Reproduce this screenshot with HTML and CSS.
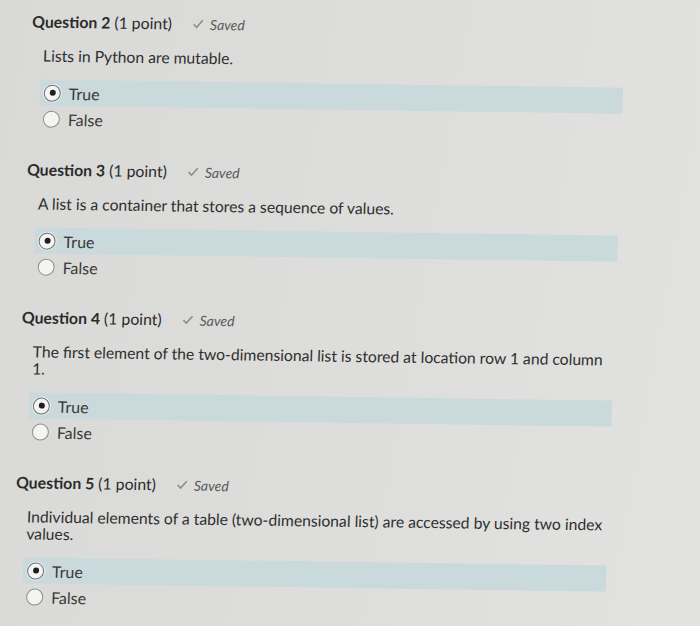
FILE: index.html
```html
<!DOCTYPE html>
<html lang="en">
<head>
<meta charset="utf-8">
<title>Quiz</title>
<link rel="stylesheet" href="styles.css">
</head>
<body>
<div class="page">
  <div class="quiz">
    <section class="question">
      <div class="q-head"><span class="q-title"><b>Question 2</b> (1 point)</span><span class="saved"><svg class="check" viewBox="0 0 12 12"><path d="M1.5 6.5 L4.5 9.5 L10.5 2.5"/></svg>Saved</span></div>
      <p class="q-text">Lists in Python are mutable.</p>
      <div class="options">
        <div class="opt selected"><span class="radio"></span><span class="label">True</span></div>
        <div class="opt"><span class="radio"></span><span class="label">False</span></div>
      </div>
    </section>
    <section class="question">
      <div class="q-head"><span class="q-title"><b>Question 3</b> (1 point)</span><span class="saved"><svg class="check" viewBox="0 0 12 12"><path d="M1.5 6.5 L4.5 9.5 L10.5 2.5"/></svg>Saved</span></div>
      <p class="q-text">A list is a container that stores a sequence of values.</p>
      <div class="options">
        <div class="opt selected"><span class="radio"></span><span class="label">True</span></div>
        <div class="opt"><span class="radio"></span><span class="label">False</span></div>
      </div>
    </section>
    <section class="question">
      <div class="q-head"><span class="q-title"><b>Question 4</b> (1 point)</span><span class="saved"><svg class="check" viewBox="0 0 12 12"><path d="M1.5 6.5 L4.5 9.5 L10.5 2.5"/></svg>Saved</span></div>
      <p class="q-text">The first element of the two-dimensional list is stored at location row 1 and column 1.</p>
      <div class="options">
        <div class="opt selected"><span class="radio"></span><span class="label">True</span></div>
        <div class="opt"><span class="radio"></span><span class="label">False</span></div>
      </div>
    </section>
    <section class="question">
      <div class="q-head"><span class="q-title"><b>Question 5</b> (1 point)</span><span class="saved"><svg class="check" viewBox="0 0 12 12"><path d="M1.5 6.5 L4.5 9.5 L10.5 2.5"/></svg>Saved</span></div>
      <p class="q-text">Individual elements of a table (two-dimensional list) are accessed by using two index values.</p>
      <div class="options">
        <div class="opt selected"><span class="radio"></span><span class="label">True</span></div>
        <div class="opt"><span class="radio"></span><span class="label">False</span></div>
      </div>
    </section>
  </div>
</div>
</body>
</html>
```
FILE: styles.css
```css
html, body {
  margin: 0;
  padding: 0;
  height: 100%;
  overflow: hidden;
}
body {
  background: linear-gradient(100deg, #d9d9d7 0%, #dddddb 50%, #e2e2e0 100%);
  font-family: Lato, "Open Sans", sans-serif;
  color: #333;
}
.page {
  width: 700px;
  height: 626px;
  overflow: hidden;
}
.quiz {
  padding: 10px 0 0 33px;
  width: 610px;
  transform-origin: 0 0;
  transform: rotate(0.8deg) skewX(-1.2deg);
}
.question {
  margin-bottom: 27px;
}
.q-head {
  display: flex;
  align-items: center;
  height: 20px;
  gap: 20px;
}
.q-title {
  font-size: 15.8px;
  color: #2b2b2b;
}
.q-title b {
  font-weight: 700;
}
.saved {
  display: flex;
  align-items: center;
  gap: 6px;
  font-size: 14px;
  font-style: italic;
  color: #5a5a5a;
  padding-top: 2px;
}
.check {
  width: 12px;
  height: 12px;
  fill: none;
  stroke: #8c8c8c;
  stroke-width: 1.6;
}
.q-text {
  margin: 17px 0 0 12px;
  width: 581px;
  font-size: 15.7px;
  line-height: 17px;
  color: #2f2f2f;
}
.options {
  margin: 15px 0 0 10px;
  width: 583px;
}
.opt {
  display: flex;
  align-items: center;
  height: 26px;
  gap: 8px;
  padding-left: 4px;
}
.opt.selected {
  background: #c9d9dc;
}
.radio {
  width: 15px;
  height: 15px;
  border: 1.5px solid #8e8e8e;
  border-radius: 50%;
  background: #f4f4f3;
  display: flex;
  align-items: center;
  justify-content: center;
  box-sizing: content-box;
}
.opt.selected .radio {
  border-color: #6d6d6d;
  box-shadow: 0 0 0 1px #e6eef0;
}
.opt.selected .radio::after {
  content: "";
  width: 6px;
  height: 6px;
  border-radius: 50%;
  background: #1e1e1e;
}
.label {
  font-size: 16px;
  color: #3a3a3a;
}
```
